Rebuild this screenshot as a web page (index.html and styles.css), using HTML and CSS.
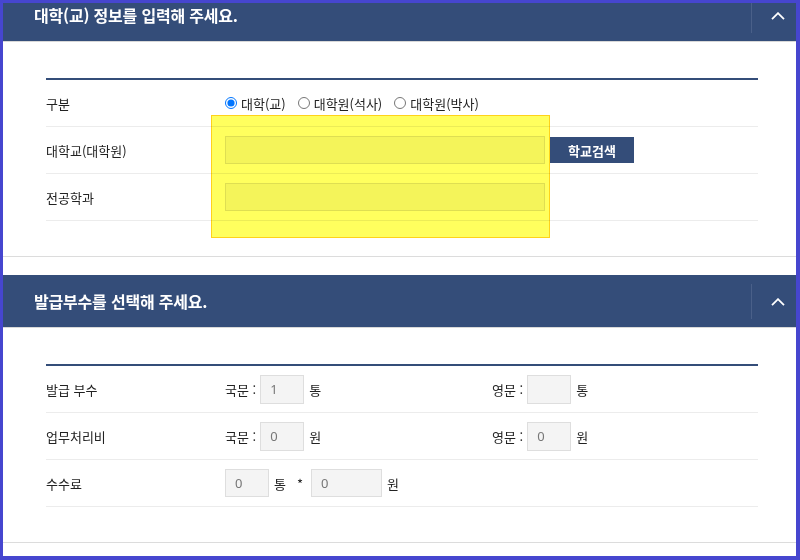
FILE: index.html
```html
<!DOCTYPE html>
<html lang="ko">
<head>
<meta charset="utf-8">
<title>증명서 신청</title>
<link rel="stylesheet" href="styles.css">
</head>
<body>
<div class="page">
  <section class="panel panel-first">
    <div class="panel-head">
      <h2 class="panel-title">대학(교) 정보를 입력해 주세요.</h2>
      <button class="toggle" type="button" aria-label="접기">
        <svg width="14" height="8" viewBox="0 0 14 8"><polyline points="1,7.2 7,1.2 13,7.2" fill="none" stroke="#fff" stroke-width="1.8"/></svg>
      </button>
    </div>
    <div class="panel-body">
      <div class="form-table">
        <div class="row">
          <div class="th">구분</div>
          <div class="td radios">
            <label class="radio"><input type="radio" name="kind" checked><span>대학(교)</span></label>
            <label class="radio"><input type="radio" name="kind"><span>대학원(석사)</span></label>
            <label class="radio"><input type="radio" name="kind"><span>대학원(박사)</span></label>
          </div>
        </div>
        <div class="row">
          <div class="th">대학교(대학원)</div>
          <div class="td">
            <input class="text wide" type="text">
            <button class="btn" type="button">학교검색</button>
          </div>
        </div>
        <div class="row">
          <div class="th">전공학과</div>
          <div class="td">
            <input class="text wide" type="text">
          </div>
        </div>
      </div>
    </div>
  </section>

  <section class="panel">
    <div class="panel-head">
      <h2 class="panel-title">발급부수를 선택해 주세요.</h2>
      <button class="toggle" type="button" aria-label="접기">
        <svg width="14" height="8" viewBox="0 0 14 8"><polyline points="1,7.2 7,1.2 13,7.2" fill="none" stroke="#fff" stroke-width="1.8"/></svg>
      </button>
    </div>
    <div class="panel-body">
      <div class="form-table">
        <div class="row">
          <div class="th">발급 부수</div>
          <div class="td split">
            <div class="half"><span class="lbl">국문 :</span><input class="text small" type="text" value="1"><span class="unit">통</span></div>
            <div class="half"><span class="lbl">영문 :</span><input class="text small" type="text" value=""><span class="unit">통</span></div>
          </div>
        </div>
        <div class="row">
          <div class="th">업무처리비</div>
          <div class="td split">
            <div class="half"><span class="lbl">국문 :</span><input class="text small" type="text" value="0"><span class="unit">원</span></div>
            <div class="half"><span class="lbl">영문 :</span><input class="text small" type="text" value="0"><span class="unit">원</span></div>
          </div>
        </div>
        <div class="row">
          <div class="th">수수료</div>
          <div class="td">
            <input class="text small first" type="text" value="0"><span class="unit">통</span><span class="times">*</span><input class="text mid" type="text" value="0"><span class="unit">원</span>
          </div>
        </div>
      </div>
    </div>
  </section>
</div>
<div class="highlight"></div>
<div class="frame"></div>
</body>
</html>
```

FILE: styles.css
```css
* { box-sizing: border-box; }

html, body {
  margin: 0;
  padding: 0;
  background: #fff;
}

body {
  width: 800px;
  height: 560px;
  overflow: hidden;
  position: relative;
  font-family: "Noto Sans CJK KR", "Noto Sans", sans-serif;
  font-size: 13px;
  color: #222;
}

.page {
  display: flex;
  flex-direction: column;
}

.panel {
  background: #fff;
  border-bottom: 1px solid #dcdcdc;
  margin-bottom: 18px;
}

.panel-first {
  margin-top: -11px;
}

.panel-head {
  height: 52px;
  background: #344d79;
  display: flex;
  align-items: center;
  justify-content: space-between;
  padding-left: 34px;
}

.panel-title {
  margin: 0;
  font-size: 16px;
  font-weight: 700;
  color: #fff;
  letter-spacing: -0.2px;
}

.toggle {
  width: 49px;
  height: 35px;
  margin-top: 1px;
  border: 0;
  border-left: 1px solid #4a6089;
  background: transparent;
  padding: 0 0 0 4px;
  display: flex;
  align-items: center;
  justify-content: center;
}

.toggle svg { display: block; }

.panel-body {
  border-top: 1px solid #d8d8d8;
  padding: 36px 42px 35px 46px;
}

.form-table {
  border-top: 2px solid #344d79;
}

.row {
  display: flex;
  align-items: center;
  height: 47px;
  border-bottom: 1px solid #ececec;
}

.th {
  width: 179px;
  flex: none;
  color: #222;
}

.td {
  flex: 1;
  display: flex;
  align-items: center;
}

.radios { gap: 12px; }

.radio {
  display: flex;
  align-items: center;
  gap: 4px;
  color: #222;
}

.radio input {
  margin: 0;
  width: 12px;
  height: 12px;
}

.text {
  height: 28px;
  border: 1px solid #dedede;
  background: #f4f4f4;
  font-family: "Noto Sans", sans-serif;
  font-size: 13px;
  color: #777;
  padding: 0 0 0 9px;
  margin: 0;
  outline: none;
}

.wide { width: 320px; }

.small { width: 44px; height: 29px; margin-left: 4px; }
.small.first { margin-left: 0; height: 28px; }
.mid { width: 71px; }

.btn {
  margin-left: 5px;
  width: 84px;
  height: 26px;
  border: 0;
  background: #344d79;
  color: #fff;
  font-family: "Noto Sans CJK KR", sans-serif;
  font-size: 13px;
  font-weight: 700;
  padding: 0;
}

.split .half {
  width: 267px;
  display: flex;
  align-items: center;
}

.lbl { white-space: nowrap; }

.unit { margin-left: 5px; }

.times {
  margin: 0 8px 0 11px;
}

.highlight {
  position: absolute;
  left: 211px;
  top: 115px;
  width: 339px;
  height: 123px;
  background: #ffff5e;
  border: 1px solid #ffd21a;
  mix-blend-mode: multiply;
  pointer-events: none;
}

.frame {
  position: fixed;
  inset: 0;
  border: 3px solid #4646cf;
  border-right-width: 4px;
  border-bottom-width: 4px;
  pointer-events: none;
}
```
